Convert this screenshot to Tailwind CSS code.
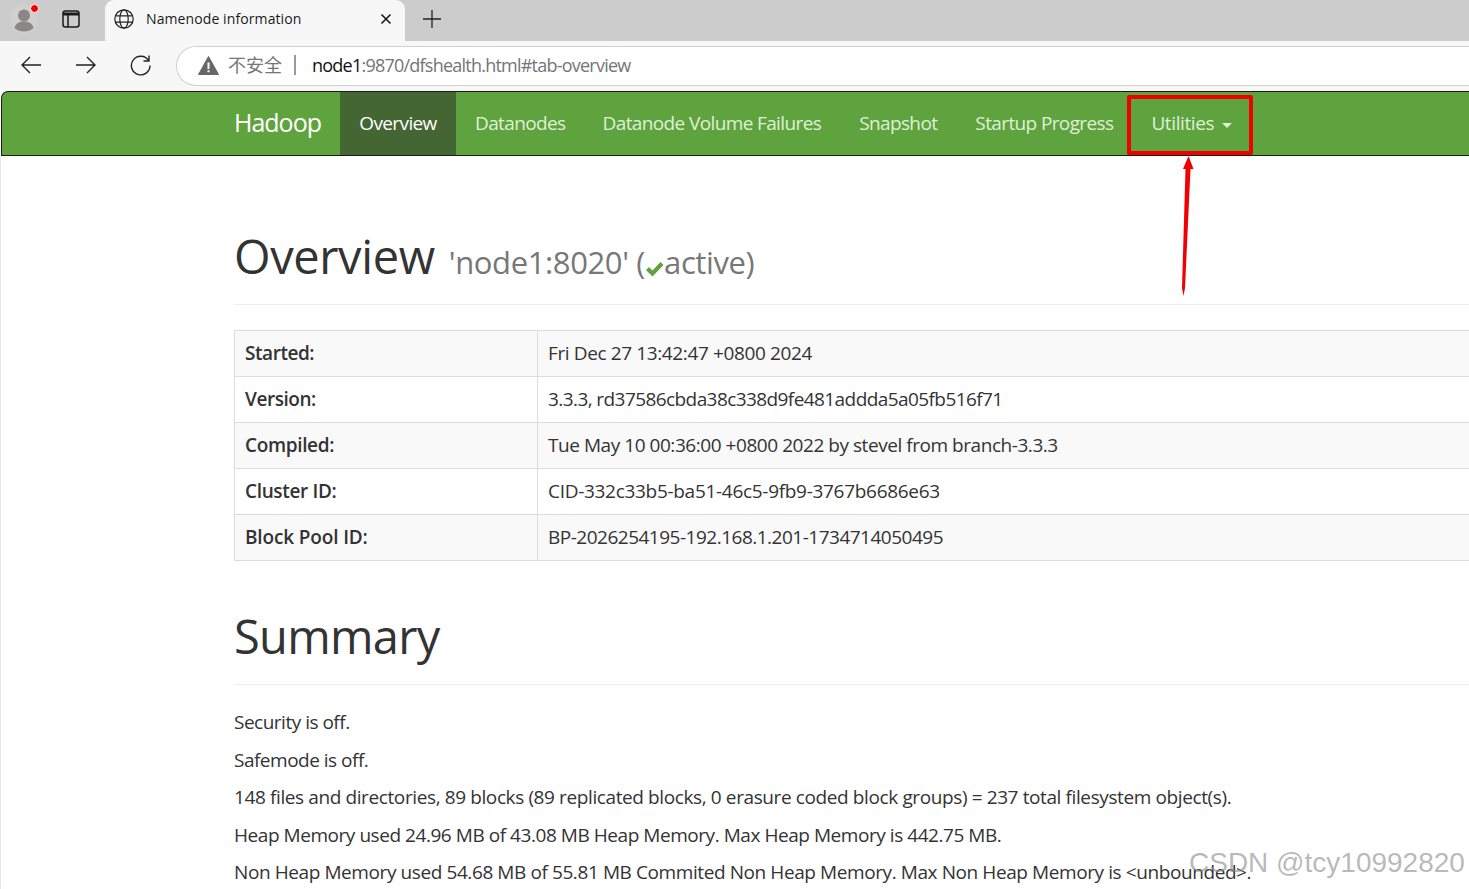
<!DOCTYPE html>
<html lang="zh">
<head>
<meta charset="utf-8">
<title>Namenode information</title>
<script src="https://cdn.jsdelivr.net/npm/@tailwindcss/browser@4"></script>
</head>
<body class="bg-white">
<div class="relative h-[889px] w-[1469px] overflow-hidden bg-white font-['Open_Sans','Noto_Sans_CJK_SC',sans-serif] text-[#333]">

  <!-- browser tabs -->
  <div class="flex h-[41px] items-center bg-[#cccccc]">
    <div class="mb-[4px] flex w-[105px] items-center pl-[10px]">
      <div class="relative flex h-[28px] w-[28px] items-center justify-center rounded-full bg-[#d2d0ce]">
        <svg width="28" height="28" viewBox="0 0 28 28"><circle cx="14" cy="10.5" r="6" fill="#8a8886"/><path d="M4.500 23c1-5 5-6.500 9.500-6.500s8.500 1.500 9.500 6.500c-2.500 2.500-6 3.500-9.500 3.500s-7-1-9.500-3.500z" fill="#8a8886"/></svg>
        <span class="absolute right-[-1px] top-[-1px] h-[9px] w-[9px] rounded-full border border-white bg-[#f00000]"></span>
      </div>
      <svg class="ml-[24px]" width="18" height="18" viewBox="0 0 18 18" fill="none" stroke="#1a1a1a" stroke-width="1.500"><rect x="1" y="1" width="16" height="16" rx="2.500"/><path d="M1 4h16" stroke-width="3"/><path d="M6 4v13"/></svg>
    </div>
    <div class="flex h-[41px] w-[300px] items-center rounded-t-[9px] bg-[#f7f7f7] pb-[4px] pl-[9px] pr-[13px]">
      <svg width="20" height="20" viewBox="0 0 20 20" fill="none" stroke="#222" stroke-width="1.200"><circle cx="10" cy="10" r="9.200"/><ellipse cx="10" cy="10" rx="4.200" ry="9.200"/><path d="M1.500 6.800h17M1.500 13.200h17"/></svg>
      <span class="ml-[12px] flex-1 text-[14px] tracking-[0.1px] text-[#1a1a1a]">Namenode information</span>
      <svg width="12" height="12" viewBox="0 0 12 12" stroke="#111" stroke-width="1.500"><path d="M1.500 1.500l9 9M10.500 1.500l-9 9"/></svg>
    </div>
    <svg class="mb-[4px] ml-[18px]" width="18" height="18" viewBox="0 0 18 18" stroke="#222" stroke-width="1.300"><path d="M9 0v18M0 9h18"/></svg>
  </div>

  <!-- browser toolbar -->
  <div class="flex h-[50px] items-center bg-[#f7f7f7]">
    <div class="mb-[2px] flex w-[176px] items-center pl-[21px]">
      <svg width="20" height="18" viewBox="0 0 20 18" fill="none" stroke="#222" stroke-width="1.400"><path d="M20 9H1M9 1L1 9l8 8"/></svg>
      <svg class="ml-[35px]" width="20" height="18" viewBox="0 0 20 18" fill="none" stroke="#222" stroke-width="1.400"><path d="M0 9h19M11 1l8 8-8 8"/></svg>
      <svg class="ml-[34px]" width="21" height="21" viewBox="0 0 21 21" fill="none" stroke="#222" stroke-width="1.400"><path d="M18.500 5.500A9.300 9.300 0 1 0 20 10.500"/><path d="M19 0.500v5.500h-5.500"/></svg>
    </div>
    <div class="flex h-[40px] flex-1 items-center rounded-l-[20px] border border-r-0 border-[#d0d0d0] bg-white pb-[2px] pl-[21px]">
      <svg width="21" height="19" viewBox="0 0 21 19"><path d="M10.500 0.500L20.500 18.500H0.500z" fill="#666" stroke="#666" stroke-linejoin="round"/><path d="M9.500 6.500h2v6.500h-2zM9.500 14.200h2v2h-2z" fill="#fff"/></svg>
      <span class="ml-[9px] text-[18px] text-[#767676]">不安全</span>
      <span class="ml-[12px] h-[20px] w-[2px] bg-[#9a9a9a]"></span>
      <span class="ml-[16px] text-[18px] tracking-[-0.77px] text-[#757575]"><span class="text-[#111]">node1</span>:9870/dfshealth.html#tab-overview</span>
    </div>
  </div>

  <!-- hadoop navbar -->
  <nav class="ml-px flex h-[65px] items-stretch rounded-tl-[7px] border border-r-0 border-[#1a1a1a] bg-[#5fa33e] pl-[232px] text-[19px] tracking-[-0.62px] text-[#dff0d8]">
    <a class="mr-[19px] flex items-center pb-[2px] text-[25px] tracking-[-1px] text-white">Hadoop</a>
    <a class="flex w-[116px] items-center justify-center bg-[#446633] text-white">Overview</a>
    <a class="ml-[19px] flex items-center">Datanodes</a>
    <a class="ml-[37px] flex items-center">Datanode Volume Failures</a>
    <a class="ml-[38px] flex items-center">Snapshot</a>
    <a class="ml-[38px] flex items-center">Startup Progress</a>
    <a class="ml-[38px] flex items-center tracking-[-0.4px]">Utilities<span class="ml-[8px] mt-[3px] h-0 w-0 border-x-[5px] border-t-[5px] border-x-transparent border-t-[#dff0d8]"></span></a>
  </nav>

  <!-- page -->
  <main class="h-[733px] border-l border-[#e5e5e5] pl-[233px] pt-[69px]">
    <div class="flex h-[80px] items-baseline border-b border-[#eeeeee]">
      <h1 class="text-[47px] leading-[62px] tracking-[-0.38px] text-[#333]">Overview</h1>
      <span class="ml-[14px] text-[31px] tracking-[-0.38px] text-[#777]">'node1:8020' (<svg class="inline-block align-[-3px]" width="19" height="16" viewBox="0 0 19 16"><path d="M1 9l3-3 3.500 3.500L15.500 1 18.500 4 7.500 15.500z" fill="#5fa33e"/></svg>active)</span>
    </div>

    <table class="mt-[25px] w-[1400px] border-collapse text-[19px] tracking-[-0.45px]">
      <tbody>
        <tr class="h-[46px] bg-[#f9f9f9]"><th class="w-[303px] border border-[#dddddd] pl-[10px] text-left font-semibold">Started:</th><td class="border border-[#dddddd] pl-[10px] tracking-[-0.38px]">Fri Dec 27 13:42:47 +0800 2024</td></tr>
        <tr class="h-[46px] bg-white"><th class="border border-[#dddddd] pl-[10px] text-left font-semibold">Version:</th><td class="border border-[#dddddd] pl-[10px] tracking-[-0.58px]">3.3.3, rd37586cbda38c338d9fe481addda5a05fb516f71</td></tr>
        <tr class="h-[46px] bg-[#f9f9f9]"><th class="border border-[#dddddd] pl-[10px] text-left font-semibold tracking-[-0.35px]">Compiled:</th><td class="border border-[#dddddd] pl-[10px]">Tue May 10 00:36:00 +0800 2022 by stevel from branch-3.3.3</td></tr>
        <tr class="h-[46px] bg-white"><th class="border border-[#dddddd] pl-[10px] text-left font-semibold tracking-[-0.35px]">Cluster ID:</th><td class="border border-[#dddddd] pl-[10px] tracking-[-0.3px]">CID-332c33b5-ba51-46c5-9fb9-3767b6686e63</td></tr>
        <tr class="h-[46px] bg-[#f9f9f9]"><th class="border border-[#dddddd] pl-[10px] text-left font-semibold tracking-[-0.15px]">Block Pool ID:</th><td class="border border-[#dddddd] pl-[10px] tracking-[-0.5px]">BP-2026254195-192.168.1.201-1734714050495</td></tr>
      </tbody>
    </table>

    <div class="mt-[44px] h-[80px] border-b border-[#eeeeee]">
      <h2 class="text-[47px] leading-[62px] tracking-[-0.7px] text-[#333]">Summary</h2>
    </div>

    <div class="mt-[24px] flex flex-col gap-[10.500px] text-[19px] leading-[27px] tracking-[-0.5px] whitespace-nowrap">
      <p>Security is off.</p>
      <p>Safemode is off.</p>
      <p class="tracking-[-0.39px]">148 files and directories, 89 blocks (89 replicated blocks, 0 erasure coded block groups) = 237 total filesystem object(s).</p>
      <p class="tracking-[-0.45px]">Heap Memory used 24.96 MB of 43.08 MB Heap Memory. Max Heap Memory is 442.75 MB.</p>
      <p class="tracking-[-0.41px]">Non Heap Memory used 54.68 MB of 55.81 MB Commited Non Heap Memory. Max Non Heap Memory is &lt;unbounded&gt;.</p>
    </div>
  </main>

  <!-- annotations drawn over the screenshot -->
  <div class="absolute left-[1127px] top-[95px] h-[60px] w-[126px] rounded-[2px] border-[4px] border-[#f00000]"></div>
  <svg class="absolute left-[1174px] top-[154px]" width="24" height="144" viewBox="0 0 24 144"><path d="M14.500 2L19.500 15H16.500L11 134L9.500 142L8 134L11.500 15H9z" fill="#f00000"/></svg>
  <div class="absolute left-[1189px] top-[846px] whitespace-nowrap font-['Liberation_Sans',sans-serif] text-[28px] leading-[34px] text-[#8a8a8a]/60">CSDN @tcy10992820</div>
</div>
</body>
</html>
